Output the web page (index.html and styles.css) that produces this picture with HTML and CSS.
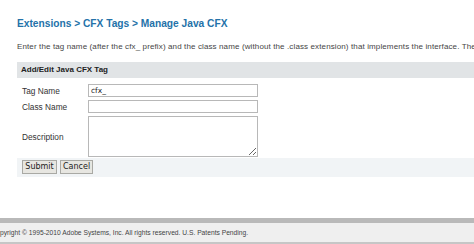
FILE: index.html
```html
<!DOCTYPE html>
<html>
<head>
<meta charset="utf-8">
<title>Manage Java CFX</title>
<link rel="stylesheet" href="styles.css">
</head>
<body>
<div class="main">
  <h1 class="title">Extensions &gt; CFX Tags &gt; Manage Java CFX</h1>
  <p class="intro">Enter the tag name (after the cfx_ prefix) and the class name (without the .class extension) that implements the interface. The class must be in the classpath.</p>
  <form class="panel">
    <div class="panel-head">Add/Edit Java CFX Tag</div>
    <div class="fields">
      <label class="lbl">Tag Name</label>
      <input class="txt" type="text" value="cfx_">
      <label class="lbl">Class Name</label>
      <input class="txt" type="text" value="">
      <label class="lbl">Description</label>
      <textarea class="area"></textarea>
    </div>
    <div class="actions">
      <button class="btn" type="button">Submit</button>
      <button class="btn" type="button">Cancel</button>
    </div>
  </form>
</div>
<div class="footer">
  <div class="footer-text">Copyright © 1995-2010 Adobe Systems, Inc. All rights reserved. U.S. Patents Pending.</div>
</div>
</body>
</html>
```
FILE: styles.css
```css
html, body {
  margin: 0;
  padding: 0;
  background: #ffffff;
  overflow: hidden;
}
body {
  width: 474px;
  height: 244px;
  font-family: "Liberation Sans", Arial, sans-serif;
}
.main {
  padding-left: 17px;
  width: 700px;
}
.title {
  margin: 18px 0 0 0;
  font-size: 10.2px;
  line-height: 12px;
  font-weight: bold;
  color: #2472a9;
}
.intro {
  margin: 12px 0 0 0;
  font-size: 8px;
  line-height: 10px;
  letter-spacing: 0.12px;
  color: #454545;
  white-space: nowrap;
}
.panel {
  margin: 10px 0 0 0;
}
.panel-head {
  height: 16px;
  line-height: 16px;
  padding-left: 4px;
  background: #e1e4e6;
  font-size: 8px;
  font-weight: bold;
  color: #222;
}
.fields {
  display: grid;
  grid-template-columns: 66px 170px;
  row-gap: 3px;
  align-items: center;
  padding: 6px 0 1px 5px;
}
.lbl {
  font-size: 8.3px;
  color: #333;
}
.txt {
  box-sizing: border-box;
  width: 170px;
  height: 13px;
  margin: 0;
  padding: 0 2px;
  border: 1px solid #b8b8b8;
  font-family: "DejaVu Sans", Tahoma, sans-serif;
  font-size: 7.5px;
  color: #222;
  outline: none;
}
.area {
  box-sizing: border-box;
  width: 170px;
  height: 41px;
  margin: 0;
  padding: 1px 2px;
  border: 1px solid #b8b8b8;
  font-size: 8px;
  outline: none;
}
.actions {
  display: flex;
  gap: 3px;
  padding: 2px 0 3px 5px;
  background: #f1f4f6;
}
.btn {
  box-sizing: border-box;
  height: 14px;
  margin: 0;
  padding: 0 2px;
  border: 1px solid #a9a9a4;
  border-radius: 0;
  background: #e7e6e1;
  font-family: "DejaVu Sans", Tahoma, sans-serif;
  font-size: 8px;
  line-height: 12px;
  color: #222;
}
.btn:first-child {
  width: 35px;
}
.btn:last-child {
  width: 33px;
}
.footer {
  margin-top: 41px;
  border-top: 5px solid #b9b9b9;
  border-bottom: 3px solid #c6c6c6;
  background: #efefef;
}
.footer-text {
  height: 19px;
  line-height: 19px;
  font-size: 6.7px;
  color: #444;
  text-indent: -8.5px;
  white-space: nowrap;
}
```
